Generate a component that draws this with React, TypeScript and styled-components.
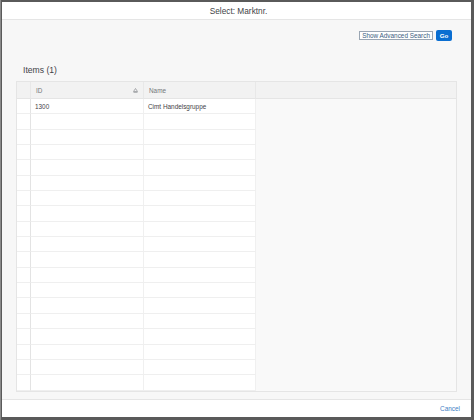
import React from "react";
import styled, { createGlobalStyle } from "styled-components";

const Global = createGlobalStyle`
  html, body { margin: 0; padding: 0; background: #5c5c5c; }
  body { font-family: "Liberation Sans", Arial, sans-serif; }
  * { box-sizing: border-box; }
`;

const Screen = styled.div`
  width: 474px;
  height: 420px;
  padding: 2px 3px 3px 1px;
  background: #5a5a5a;
  display: flex;
  border-left: 1px solid #8a8a8a;
`;

const Dialog = styled.div`
  flex: 1;
  display: flex;
  flex-direction: column;
  background: #f7f7f7;
  overflow: hidden;
`;

const Header = styled.div`
  height: 18px;
  flex: none;
  background: #fff;
  border-bottom: 1px solid #e5e5e5;
  display: flex;
  align-items: center;
  justify-content: center;
  font-size: 8.3px;
  color: #3f4347;
  padding-left: 4px;
`;

const Content = styled.div`
  flex: 1;
  display: flex;
  flex-direction: column;
  padding: 10px 14px 0 14px;
`;

const Toolbar = styled.div`
  height: 11px;
  display: flex;
  justify-content: flex-end;
  align-items: center;
  gap: 3px;
  padding-right: 5px;
`;

const OutlineButton = styled.button`
  height: 9px;
  padding: 0 2px;
  border: 1px solid #9aa6b3;
  background: #fff;
  color: #3b5e80;
  font-family: inherit;
  font-size: 6.4px;
  line-height: 7px;
  border-radius: 0;
  margin: 0;
  display: flex;
  align-items: center;
`;

const PrimaryButton = styled.button`
  width: 16px;
  height: 11px;
  padding: 0;
  border: none;
  border-radius: 2px;
  background: #0a6ed1;
  color: #fff;
  font-family: inherit;
  font-weight: bold;
  font-size: 6.2px;
  margin: 0;
  display: flex;
  align-items: center;
  justify-content: center;
`;

const SectionTitle = styled.div`
  margin-top: 24px;
  height: 10px;
  line-height: 10px;
  padding-left: 7px;
  font-size: 8.6px;
  color: #3f4347;
`;

const Table = styled.div`
  margin-top: 6px;
  border: 1px solid #e5e5e5;
  display: grid;
  grid-template-columns: 14px 113px 112px 1fr;
  background: #fafafa;
`;

const HeadCell = styled.div<{ $last?: boolean }>`
  height: 17px;
  background: #f2f2f2;
  border-bottom: 1px solid #e5e5e5;
  border-right: ${(p) => (p.$last ? "none" : "1px solid #e8e8e8")};
  display: flex;
  align-items: center;
  justify-content: space-between;
  padding: 0 5px 0 5px;
  font-size: 6.4px;
  color: #74777a;
`;

const Cell = styled.div<{ $sel?: boolean }>`
  height: 15.35px;
  background: #fff;
  border-bottom: 1px solid #efefef;
  border-right: 1px solid ${(p) => (p.$sel ? "#e3e3e3" : "#f0f0f0")};
  display: flex;
  align-items: center;
  padding-left: ${(p) => (p.$sel ? "0" : "4px")};
  font-size: 6.4px;
  color: #3f4347;
  white-space: nowrap;
`;

const FillerCell = styled.div`
  height: 15.35px;
  background: #f9f9f9;
`;

const Footer = styled.div`
  height: 18px;
  flex: none;
  margin-top: 7px;
  background: #fff;
  border-top: 1px solid #e5e5e5;
  display: flex;
  align-items: center;
  justify-content: flex-end;
  padding-right: 11px;
`;

const LinkButton = styled.button`
  border: none;
  background: none;
  padding: 0;
  margin: 0;
  font-family: inherit;
  font-size: 6.4px;
  color: #3f7fc4;
`;

const SortIcon = () => (
  <svg width="5" height="5" viewBox="0 0 10 10">
    <path d="M5 1 L9 7 L1 7 Z" fill="none" stroke="#8a8d90" strokeWidth="1.4" />
    <path d="M1 9.3 H9" stroke="#8a8d90" strokeWidth="1.4" />
  </svg>
);

const rows: [string, string][] = [["1300", "Cimt Handelsgruppe"]];
while (rows.length < 19) rows.push(["", ""]);

export default function App() {
  return (
    <>
      <Global />
      <Screen>
        <Dialog>
          <Header>Select: Marktnr.</Header>
          <Content>
            <Toolbar>
              <OutlineButton>Show Advanced Search</OutlineButton>
              <PrimaryButton>Go</PrimaryButton>
            </Toolbar>
            <SectionTitle>Items (1)</SectionTitle>
            <Table>
              <HeadCell />
              <HeadCell>
                <span>ID</span>
                <SortIcon />
              </HeadCell>
              <HeadCell>
                <span>Name</span>
              </HeadCell>
              <HeadCell $last />
              {rows.map(([id, name], i) => (
                <React.Fragment key={i}>
                  <Cell $sel />
                  <Cell>{id}</Cell>
                  <Cell>{name}</Cell>
                  <FillerCell />
                </React.Fragment>
              ))}
            </Table>
          </Content>
          <Footer>
            <LinkButton>Cancel</LinkButton>
          </Footer>
        </Dialog>
      </Screen>
    </>
  );
}
